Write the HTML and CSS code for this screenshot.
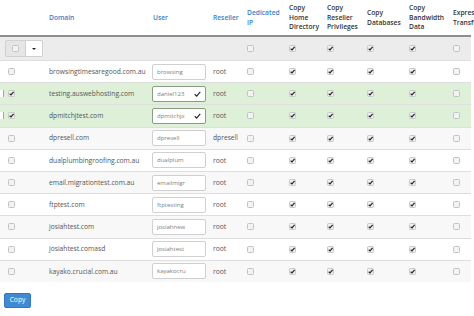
FILE: index.html
```html
<!DOCTYPE html>
<html lang="en">
<head>
<meta charset="utf-8">
<link rel="stylesheet" href="styles.css">
</head>
<body>
<svg class="defs" width="0" height="0" aria-hidden="true">
  <symbol id="cb-off" viewBox="0 0 7 7"><rect x="0.5" y="0.5" width="6" height="6" rx="1" fill="#f3f3f3" stroke="#c2c2c2"/></symbol>
  <symbol id="cb-on" viewBox="0 0 7 7"><rect x="0.5" y="0.5" width="6" height="6" rx="1" fill="#efefef" stroke="#c8c8c8"/><path d="M1.7 3.8 L3 5 L5.6 1.9" fill="none" stroke="#262626" stroke-width="1.2"/></symbol>
  <symbol id="tick" viewBox="0 0 8 7"><path d="M0.8 3.8 L3 6 L7.2 1" fill="none" stroke="#2a2a2a" stroke-width="1.4"/></symbol>
</svg>

<div class="tbl">
  <div class="row head">
    <div></div>
    <div class="s">Domain</div>
    <div class="s">User</div>
    <div class="s">Reseller</div>
    <div class="s">Dedicated IP</div>
    <div>Copy Home Directory</div>
    <div>Copy Reseller Privileges</div>
    <div>Copy Databases</div>
    <div>Copy Bandwidth Data</div>
    <div class="ovf">Express Transfer</div>
  </div>

  <div class="row filter">
    <div class="c">
      <div class="btn-group">
        <span class="bg-btn first"><svg class="cb"><use href="#cb-off"/></svg></span>
        <span class="bg-btn"><span class="caret"></span></span>
      </div>
    </div>
    <div></div><div></div><div></div>
    <div class="c"><svg class="cb"><use href="#cb-off"/></svg></div>
    <div class="c"><svg class="cb"><use href="#cb-on"/></svg></div>
    <div class="c"><svg class="cb"><use href="#cb-on"/></svg></div>
    <div class="c"><svg class="cb"><use href="#cb-on"/></svg></div>
    <div class="c"><svg class="cb"><use href="#cb-on"/></svg></div>
    <div class="c"><svg class="cb"><use href="#cb-off"/></svg></div>
  </div>

  <div class="row item">
    <div class="c first-c"><svg class="cb"><use href="#cb-off"/></svg></div>
    <div class="dom">browsingtimesaregood.com.au</div>
    <div class="uc"><span class="field"><input class="uin" value="browsing"></span></div>
    <div class="res">root</div>
    <div class="c"><svg class="cb"><use href="#cb-off"/></svg></div>
    <div class="c"><svg class="cb"><use href="#cb-on"/></svg></div>
    <div class="c"><svg class="cb"><use href="#cb-on"/></svg></div>
    <div class="c"><svg class="cb"><use href="#cb-on"/></svg></div>
    <div class="c"><svg class="cb"><use href="#cb-on"/></svg></div>
    <div class="c"><svg class="cb"><use href="#cb-off"/></svg></div>
  </div>

  <div class="row item ok">
    <div class="c first-c"><svg class="cb"><use href="#cb-on"/></svg></div>
    <div class="dom">testing.auswebhosting.com</div>
    <div class="uc"><span class="field good"><input class="uin" value="daniel123"><svg class="tick"><use href="#tick"/></svg></span></div>
    <div class="res">root</div>
    <div class="c"><svg class="cb"><use href="#cb-off"/></svg></div>
    <div class="c"><svg class="cb"><use href="#cb-on"/></svg></div>
    <div class="c"><svg class="cb"><use href="#cb-on"/></svg></div>
    <div class="c"><svg class="cb"><use href="#cb-on"/></svg></div>
    <div class="c"><svg class="cb"><use href="#cb-on"/></svg></div>
    <div class="c"><svg class="cb"><use href="#cb-off"/></svg></div>
  </div>

  <div class="row item ok">
    <div class="c first-c"><svg class="cb"><use href="#cb-on"/></svg></div>
    <div class="dom">dpmitchjtest.com</div>
    <div class="uc"><span class="field good"><input class="uin" value="dpmitchjx"><svg class="tick"><use href="#tick"/></svg></span></div>
    <div class="res">root</div>
    <div class="c"><svg class="cb"><use href="#cb-off"/></svg></div>
    <div class="c"><svg class="cb"><use href="#cb-on"/></svg></div>
    <div class="c"><svg class="cb"><use href="#cb-on"/></svg></div>
    <div class="c"><svg class="cb"><use href="#cb-on"/></svg></div>
    <div class="c"><svg class="cb"><use href="#cb-on"/></svg></div>
    <div class="c"><svg class="cb"><use href="#cb-off"/></svg></div>
  </div>

  <div class="row item alt">
    <div class="c first-c"><svg class="cb"><use href="#cb-off"/></svg></div>
    <div class="dom">dpresell.com</div>
    <div class="uc"><span class="field"><input class="uin" value="dpresell"></span></div>
    <div class="res">dpresell</div>
    <div class="c"><svg class="cb"><use href="#cb-off"/></svg></div>
    <div class="c"><svg class="cb"><use href="#cb-on"/></svg></div>
    <div class="c"><svg class="cb"><use href="#cb-on"/></svg></div>
    <div class="c"><svg class="cb"><use href="#cb-on"/></svg></div>
    <div class="c"><svg class="cb"><use href="#cb-on"/></svg></div>
    <div class="c"><svg class="cb"><use href="#cb-off"/></svg></div>
  </div>

  <div class="row item">
    <div class="c first-c"><svg class="cb"><use href="#cb-off"/></svg></div>
    <div class="dom">dualplumbingroofing.com.au</div>
    <div class="uc"><span class="field"><input class="uin" value="dualplum"></span></div>
    <div class="res">root</div>
    <div class="c"><svg class="cb"><use href="#cb-off"/></svg></div>
    <div class="c"><svg class="cb"><use href="#cb-on"/></svg></div>
    <div class="c"><svg class="cb"><use href="#cb-on"/></svg></div>
    <div class="c"><svg class="cb"><use href="#cb-on"/></svg></div>
    <div class="c"><svg class="cb"><use href="#cb-on"/></svg></div>
    <div class="c"><svg class="cb"><use href="#cb-off"/></svg></div>
  </div>

  <div class="row item alt">
    <div class="c first-c"><svg class="cb"><use href="#cb-off"/></svg></div>
    <div class="dom">email.migrationtest.com.au</div>
    <div class="uc"><span class="field"><input class="uin" value="emailmigr"></span></div>
    <div class="res">root</div>
    <div class="c"><svg class="cb"><use href="#cb-off"/></svg></div>
    <div class="c"><svg class="cb"><use href="#cb-on"/></svg></div>
    <div class="c"><svg class="cb"><use href="#cb-on"/></svg></div>
    <div class="c"><svg class="cb"><use href="#cb-on"/></svg></div>
    <div class="c"><svg class="cb"><use href="#cb-on"/></svg></div>
    <div class="c"><svg class="cb"><use href="#cb-off"/></svg></div>
  </div>

  <div class="row item">
    <div class="c first-c"><svg class="cb"><use href="#cb-off"/></svg></div>
    <div class="dom">ftptest.com</div>
    <div class="uc"><span class="field"><input class="uin" value="ftptesting"></span></div>
    <div class="res">root</div>
    <div class="c"><svg class="cb"><use href="#cb-off"/></svg></div>
    <div class="c"><svg class="cb"><use href="#cb-on"/></svg></div>
    <div class="c"><svg class="cb"><use href="#cb-on"/></svg></div>
    <div class="c"><svg class="cb"><use href="#cb-on"/></svg></div>
    <div class="c"><svg class="cb"><use href="#cb-on"/></svg></div>
    <div class="c"><svg class="cb"><use href="#cb-off"/></svg></div>
  </div>

  <div class="row item alt">
    <div class="c first-c"><svg class="cb"><use href="#cb-off"/></svg></div>
    <div class="dom">josiahtest.com</div>
    <div class="uc"><span class="field"><input class="uin" value="josiahnew"></span></div>
    <div class="res">root</div>
    <div class="c"><svg class="cb"><use href="#cb-off"/></svg></div>
    <div class="c"><svg class="cb"><use href="#cb-on"/></svg></div>
    <div class="c"><svg class="cb"><use href="#cb-on"/></svg></div>
    <div class="c"><svg class="cb"><use href="#cb-on"/></svg></div>
    <div class="c"><svg class="cb"><use href="#cb-on"/></svg></div>
    <div class="c"><svg class="cb"><use href="#cb-off"/></svg></div>
  </div>

  <div class="row item">
    <div class="c first-c"><svg class="cb"><use href="#cb-off"/></svg></div>
    <div class="dom">josiahtest.comasd</div>
    <div class="uc"><span class="field"><input class="uin" value="josiahtest"></span></div>
    <div class="res">root</div>
    <div class="c"><svg class="cb"><use href="#cb-off"/></svg></div>
    <div class="c"><svg class="cb"><use href="#cb-on"/></svg></div>
    <div class="c"><svg class="cb"><use href="#cb-on"/></svg></div>
    <div class="c"><svg class="cb"><use href="#cb-on"/></svg></div>
    <div class="c"><svg class="cb"><use href="#cb-on"/></svg></div>
    <div class="c"><svg class="cb"><use href="#cb-off"/></svg></div>
  </div>

  <div class="row item alt">
    <div class="c first-c"><svg class="cb"><use href="#cb-off"/></svg></div>
    <div class="dom">kayako.crucial.com.au</div>
    <div class="uc"><span class="field"><input class="uin" value="kayakocru"></span></div>
    <div class="res">root</div>
    <div class="c"><svg class="cb"><use href="#cb-off"/></svg></div>
    <div class="c"><svg class="cb"><use href="#cb-on"/></svg></div>
    <div class="c"><svg class="cb"><use href="#cb-on"/></svg></div>
    <div class="c"><svg class="cb"><use href="#cb-on"/></svg></div>
    <div class="c"><svg class="cb"><use href="#cb-on"/></svg></div>
    <div class="c"><svg class="cb"><use href="#cb-off"/></svg></div>
  </div>
</div>

<button class="btn-copy">Copy</button>
</body>
</html>
```

FILE: styles.css
```css
html, body {
  margin: 0;
  padding: 0;
  overflow: hidden;
}

body {
  font-family: "Open Sans", "DejaVu Sans", sans-serif;
  font-size: 6.7px;
  line-height: 1.42;
  color: #555;
  background: #fff;
}

.defs {
  position: absolute;
  width: 0;
  height: 0;
}

.tbl {
  width: 471px;
}

.row {
  display: grid;
  grid-template-columns: 44px 104px 60px 34px 42px 38px 40px 42px 44px 23px;
  align-items: center;
}

.row > div {
  padding: 0 5px;
  box-sizing: border-box;
  min-width: 0;
}

.head {
  height: 35px;
  border-bottom: 2px solid #8e8e8e;
  font-weight: 600;
  color: #333;
}

.head .s {
  color: #3a7fc4;
}

.filter {
  height: 23px;
  background: #ececec;
}

.item {
  height: 22.2px;
  box-sizing: border-box;
  border-top: 1px solid #dedede;
  background: #fff;
}

.item.alt {
  background: #f8f8f8;
}

.item.ok {
  background: #dff0d8;
}

.item.ok .first-c {
  box-shadow: inset 3px 0 0 #ffffff, inset 4px 0 0 #7cc26f;
}

.c {
  display: flex;
  align-items: center;
}

.row > .first-c {
  padding-left: 8px;
}

.cb {
  width: 7px;
  height: 7px;
  display: block;
}

.btn-group {
  display: flex;
  height: 17px;
}

.bg-btn {
  display: flex;
  align-items: center;
  justify-content: center;
  height: 17px;
  box-sizing: border-box;
  border: 1px solid #d0d0d0;
  background: #fff;
}

.bg-btn.first {
  width: 21px;
  background: #e6e6e6;
  border-radius: 2px 0 0 2px;
}

.bg-btn:last-child {
  width: 17px;
  border-left: none;
  border-radius: 0 2px 2px 0;
}

.caret {
  width: 0;
  height: 0;
  border-left: 2px solid transparent;
  border-right: 2px solid transparent;
  border-top: 2.5px solid #222;
}

.dom {
  white-space: nowrap;
}

.row > .uc {
  padding-left: 4px;
  display: flex;
  align-items: center;
}

.field {
  position: relative;
  display: block;
  width: 54px;
  height: 16px;
}

.uin {
  width: 54px;
  height: 16px;
  box-sizing: border-box;
  margin: 0;
  padding: 0 4px;
  border: 1px solid #d0d0d0;
  border-radius: 2px;
  background: #fff;
  font-family: "Open Sans", "DejaVu Sans", sans-serif;
  font-size: 6px;
  color: #808080;
  outline: none;
}

.field.good .uin {
  border-color: #8a9d83;
}

.tick {
  position: absolute;
  right: 5px;
  top: 5px;
  width: 7px;
  height: 6px;
}

.row > .res {
  padding-left: 5px;
  white-space: nowrap;
}

.btn-copy {
  display: block;
  margin: 11px 0 0 4px;
  width: 27px;
  height: 15px;
  padding: 0;
  border: 1px solid #3575b5;
  border-radius: 2px;
  background: #3f8ad2;
  color: #fff;
  font-family: "Open Sans", "DejaVu Sans", sans-serif;
  font-size: 6.7px;
  line-height: 1;
}
```
